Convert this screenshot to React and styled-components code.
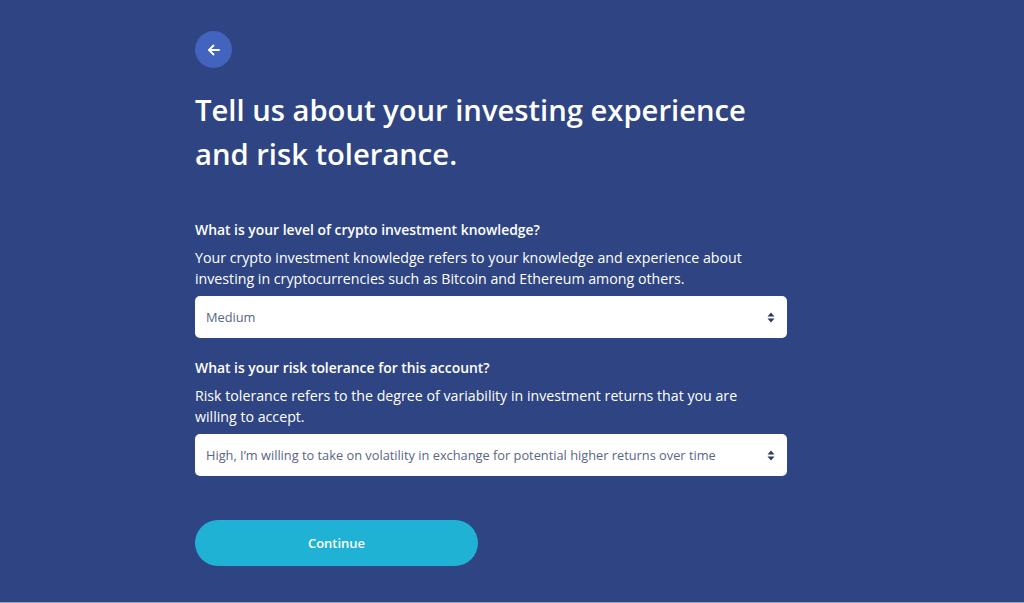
import React from 'react'
import styled, { createGlobalStyle } from 'styled-components'

const Global = createGlobalStyle`
  html, body { margin: 0; padding: 0; }
  body {
    background: #2f4583;
    font-family: "Open Sans", "Noto Sans", sans-serif;
  }
`

const Page = styled.div`
  width: 1024px;
  height: 603px;
  box-sizing: border-box;
  background: #2f4583;
  border-bottom: 1px solid #9aa3c0;
  padding: 31px 0 0 195px;
`

const Column = styled.div`
  width: 592px;
  display: flex;
  flex-direction: column;
`

const BackButton = styled.button`
  width: 37px;
  height: 37px;
  border-radius: 50%;
  border: none;
  background: #4263be;
  display: flex;
  align-items: center;
  justify-content: center;
  padding: 0;
  cursor: pointer;
`

const Title = styled.h1`
  margin: 20px 0 0;
  color: #fff;
  font-size: 29.2px;
  font-weight: 600;
  line-height: 44px;
  letter-spacing: 0;
`

const Form = styled.form`
  margin-top: 44px;
  display: flex;
  flex-direction: column;
`

const Question = styled.div`
  color: #fff;
  font-size: 13.9px;
  font-weight: 600;
  line-height: 20px;
`

const Hint = styled.p`
  margin: 7px 0 7px;
  max-width: 575px;
  color: #fff;
  font-size: 14.2px;
  line-height: 21px;
`

const SelectBox = styled.div`
  position: relative;
  height: 42px;
  background: #fff;
  border-radius: 5px;
  display: flex;
  align-items: center;
  padding: 0 12px 0 11px;
  color: #5b6585;
  font-size: 12.8px;
  margin-bottom: ${p => p.$gap}px;
`

const SelectText = styled.span`
  flex: 1;
`

const Continue = styled.button`
  width: 283px;
  height: 46px;
  border-radius: 23px;
  border: none;
  background: #20b2d4;
  color: #fff;
  font-family: inherit;
  font-size: 13px;
  font-weight: 600;
  cursor: pointer;
`

const Arrows = () => (
  <svg width="8" height="11" viewBox="0 0 8 11">
    <path d="M4 0.5 L7.5 4.5 H0.5 Z" fill="#2f3a60" />
    <path d="M4 10.5 L7.5 6.5 H0.5 Z" fill="#2f3a60" />
  </svg>
)

const Select = ({ value, gap }) => (
  <SelectBox $gap={gap}>
    <SelectText>{value}</SelectText>
    <Arrows />
  </SelectBox>
)

export default function App() {
  return (
    <Page>
      <Global />
      <Column>
        <BackButton aria-label="Back">
          <svg width="16" height="16" viewBox="0 0 16 16" fill="none" stroke="#fff" strokeWidth="1.8" strokeLinecap="round" strokeLinejoin="round">
            <path d="M13 8H3" />
            <path d="M7.5 3.5L3 8l4.5 4.5" />
          </svg>
        </BackButton>
        <Title>Tell us about your investing experience and risk tolerance.</Title>
        <Form>
          <Question>What is your level of crypto investment knowledge?</Question>
          <Hint>Your crypto investment knowledge refers to your knowledge and experience about investing in cryptocurrencies such as Bitcoin and Ethereum among others.</Hint>
          <Select value="Medium" gap={20} />
          <Question>What is your risk tolerance for this account?</Question>
          <Hint>Risk tolerance refers to the degree of variability in investment returns that you are willing to accept.</Hint>
          <Select value="High, I’m willing to take on volatility in exchange for potential higher returns over time" gap={44} />
          <Continue type="button">Continue</Continue>
        </Form>
      </Column>
    </Page>
  )
}
